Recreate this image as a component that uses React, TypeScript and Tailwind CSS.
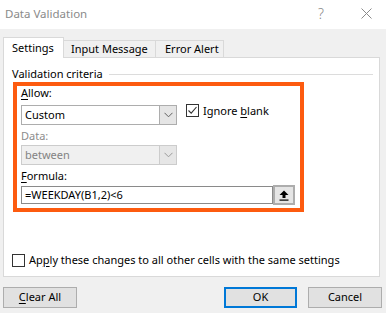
import React from 'react';

const font = { fontFamily: '"Noto Sans", "Open Sans", sans-serif' };

function Chevron({ color = '#606060' }: { color?: string }) {
  return (
    <svg width="9" height="6" viewBox="0 0 9 6">
      <polyline points="0.5,0.8 4.5,4.8 8.5,0.8" fill="none" stroke={color} strokeWidth="1" />
    </svg>
  );
}

function Select({ value, disabled }: { value: string; disabled?: boolean }) {
  return (
    <div
      className={`flex h-[20px] w-[156px] border ${
        disabled ? 'border-[#cccccc] bg-[#f0f0f0]' : 'border-[#adadad] bg-white'
      }`}
    >
      <div className={`flex-1 pl-[3px] leading-[18px] ${disabled ? 'text-[#838383]' : 'text-black'}`}>{value}</div>
      <div
        className={`flex w-[17px] items-center justify-center border-l ${
          disabled ? 'border-[#cccccc] bg-[#e6e6e6]' : 'border-[#adadad] bg-[#e5e5e5]'
        }`}
      >
        <Chevron color={disabled ? '#9a9a9a' : '#606060'} />
      </div>
    </div>
  );
}

function Check({ checked }: { checked?: boolean }) {
  return (
    <div className="flex h-[13px] w-[13px] items-center justify-center border border-[#333333] bg-white">
      {checked && (
        <svg width="11" height="11" viewBox="0 0 11 11">
          <polyline points="1.5,5.5 4.2,8.2 9.5,2" fill="none" stroke="#333333" strokeWidth="1.1" />
        </svg>
      )}
    </div>
  );
}

export default function App() {
  return (
    <div className="flex h-[313px] w-[386px] flex-col bg-[#f0f0f0] text-[11px] text-black" style={font}>
      {/* title bar */}
      <div className="flex h-[29px] items-center bg-white pb-[2px]">
        <div className="pl-[5px] text-[11.5px] text-[#8a8a8a]">Data Validation</div>
        <div className="ml-auto mr-[37px] text-[14px] font-light text-[#8a8a8a]">?</div>
        <svg className="mr-[14px]" width="11" height="11" viewBox="0 0 11 11">
          <path d="M0.5,0.5 L10.5,10.5 M10.5,0.5 L0.5,10.5" stroke="#8a8a8a" strokeWidth="1" />
        </svg>
      </div>

      {/* tabs */}
      <div className="mt-[8px] flex h-[21px] items-end pl-[3px]">
        <div className="relative z-10 h-[21px] w-[61px] border border-b-0 border-[#d9d9d9] bg-white pl-[8px] leading-[20px]">
          Settings
        </div>
        <div className="h-[18px] w-[92px] whitespace-nowrap border border-l-0 border-[#d9d9d9] pl-[7px] leading-[16px]">
          Input Message
        </div>
        <div className="h-[18px] w-[68px] whitespace-nowrap border border-l-0 border-[#d9d9d9] pl-[9px] leading-[16px]">
          Error Alert
        </div>
      </div>

      {/* panel */}
      <div className="-mt-px ml-[3px] flex h-[220px] w-[377px] flex-col border border-[#d9d9d9] bg-white">
        <div className="mt-[8px] flex items-center pl-[8px] pr-[6px]">
          <span className="leading-[16px]">Validation criteria</span>
          <div className="ml-[6px] h-px flex-1 bg-[#dcdcdc]" />
        </div>

        <div className="ml-[9px] flex h-[130px] w-[291px] flex-col border-4 border-[#fd5b0f] pl-[4px]">
          <div className="leading-[14px]">
            <span className="underline underline-offset-2">A</span>llow:
          </div>
          <div className="mt-[5px] flex items-start">
            <Select value="Custom" />
            <div className="ml-[9px] -mt-[1px]">
              <Check checked />
            </div>
            <div className="ml-[4px] -mt-[1px] leading-[14px]">
              Ignore <span className="underline underline-offset-2">b</span>lank
            </div>
          </div>
          <div className="mt-[4px] leading-[14px] text-[#8c8c8c]">Data:</div>
          <div className="mt-[2px]">
            <Select value="between" disabled />
          </div>
          <div className="mt-[4px] leading-[14px]">
            <span className="underline underline-offset-2">F</span>ormula:
          </div>
          <div className="mt-[2px] flex h-[20px] w-[274px]">
            <div className="my-px flex-1 border border-[#8a8a8a] pl-[3px] leading-[16px]">=WEEKDAY(B1,2)&lt;6</div>
            <div className="flex w-[22px] items-center justify-center border-2 border-[#adadad] bg-[#e5e5e5]">
              <svg width="10" height="11" viewBox="0 0 10 11">
                <path d="M5,0.5 L9.5,5 L6.5,5 L6.5,8 L3.5,8 L3.5,5 L0.5,5 Z" fill="#000" />
                <rect x="0.5" y="9.5" width="9" height="1.2" fill="#000" />
              </svg>
            </div>
          </div>
        </div>

        <div className="mt-[41px] flex items-center pl-[8px]">
          <Check />
          <div className="ml-[4px] leading-[14px]">
            Ap<span className="underline underline-offset-2">p</span>ly these changes to all other cells with the same settings
          </div>
        </div>
      </div>

      {/* buttons */}
      <div className="mt-[10px] flex h-[21px] pl-[3px]">
        <div className="flex w-[74px] items-center justify-center border border-[#adadad] bg-[#e1e1e1]">
          <span className="underline underline-offset-2">C</span>lear All
        </div>
        <div className="ml-[147px] flex w-[73px] items-center justify-center border-2 border-[#0078d7] bg-[#e1e1e1]">
          OK
        </div>
        <div className="ml-[11px] flex w-[74px] items-center justify-center border border-[#adadad] bg-[#e1e1e1]">
          Cancel
        </div>
      </div>
    </div>
  );
}
